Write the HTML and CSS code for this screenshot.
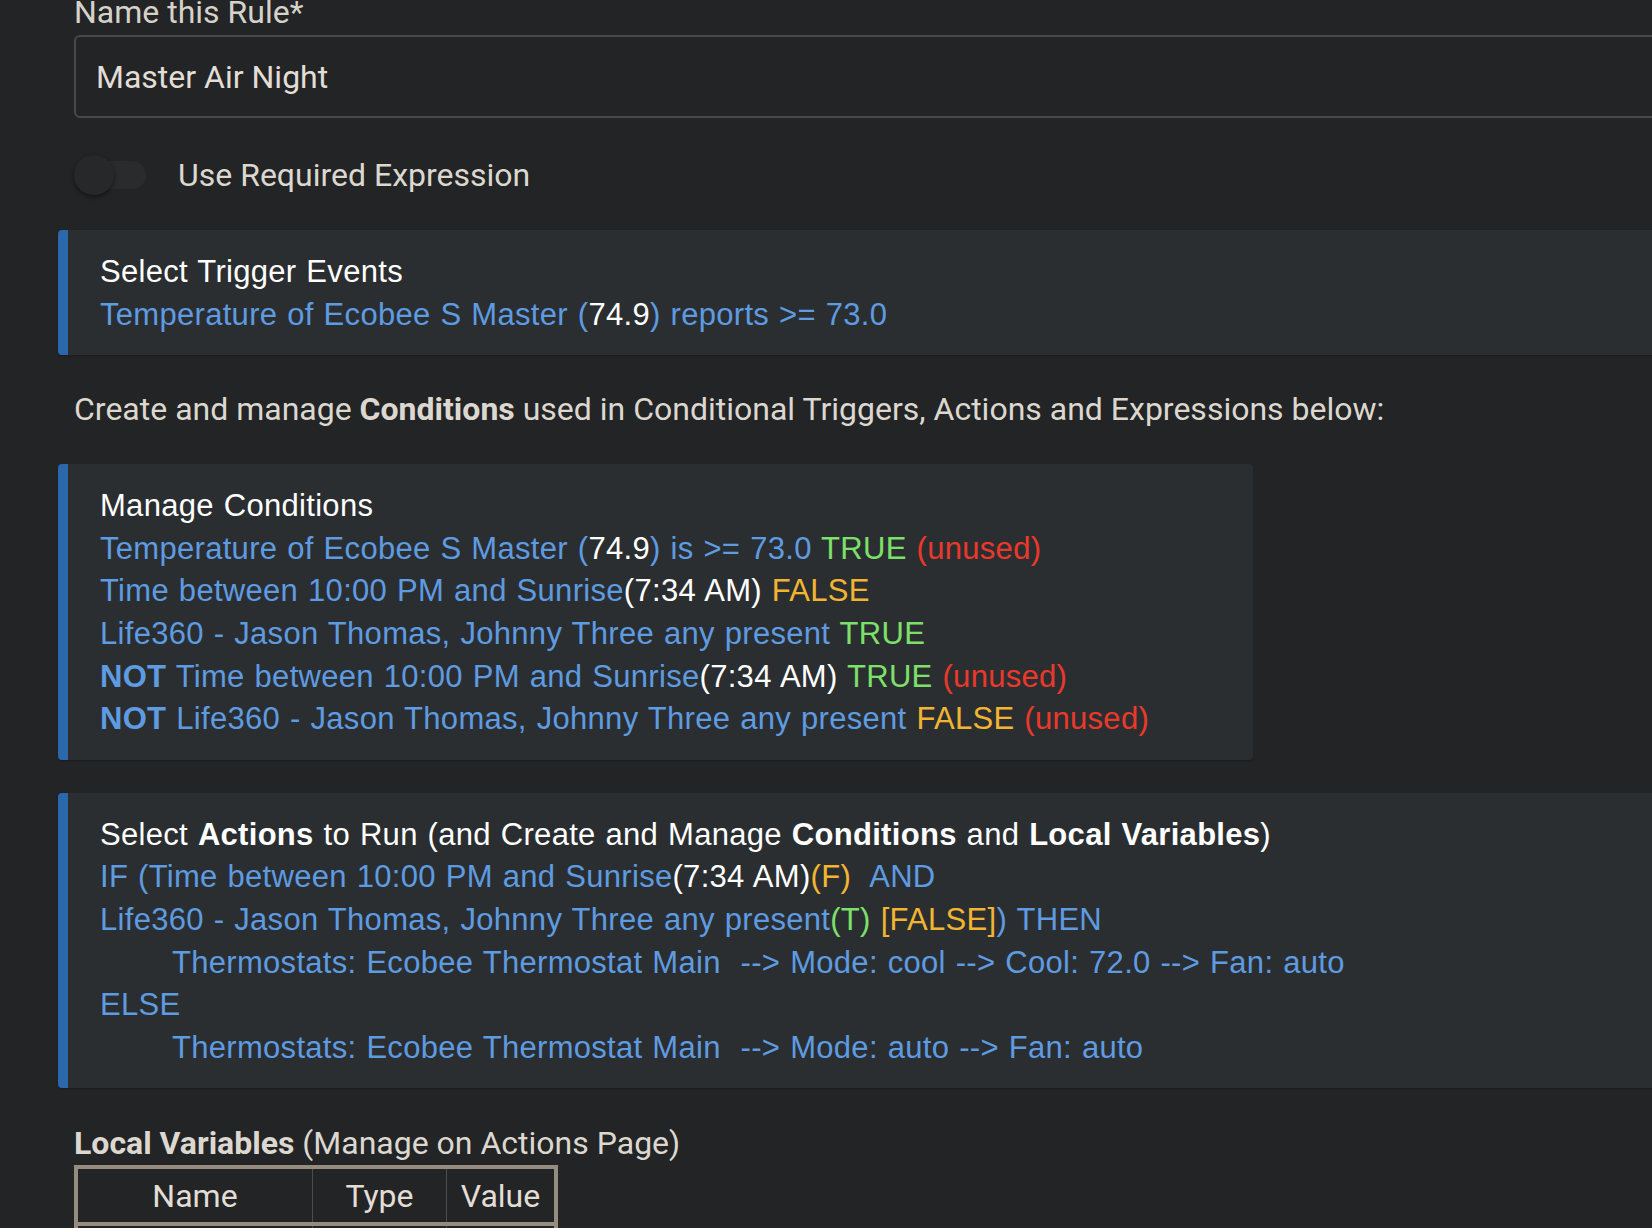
FILE: index.html
```html
<!DOCTYPE html>
<html lang="en">
<head>
<meta charset="utf-8">
<title>Master Air Night</title>
<link rel="stylesheet" href="styles.css">
</head>
<body>
<main class="page">
  <div class="field">
    <label class="field-label">Name this Rule*</label>
    <div class="text-input">Master Air Night</div>
  </div>

  <div class="switch-row">
    <span class="switch"><span class="switch-knob"></span></span>
    <span class="switch-label">Use Required Expression</span>
  </div>

  <section class="panel panel-wide panel-trigger">
    <div class="panel-title">Select Trigger Events</div>
    <div class="line">Temperature of Ecobee S Master (<span class="val">74.9</span>) reports &gt;= 73.0</div>
  </section>

  <p class="intro">Create and manage <b>Conditions</b> used in Conditional Triggers, Actions and Expressions below:</p>

  <section class="panel panel-conditions">
    <div class="panel-title">Manage Conditions</div>
    <div class="line">Temperature of Ecobee S Master (<span class="val">74.9</span>) is &gt;= 73.0 <span class="t">TRUE</span> <span class="u">(unused)</span></div>
    <div class="line">Time between 10:00 PM and Sunrise<span class="val">(7:34 AM)</span> <span class="f">FALSE</span></div>
    <div class="line">Life360 - Jason Thomas, Johnny Three any present <span class="t">TRUE</span></div>
    <div class="line"><b>NOT</b> Time between 10:00 PM and Sunrise<span class="val">(7:34 AM)</span> <span class="t">TRUE</span> <span class="u">(unused)</span></div>
    <div class="line"><b>NOT</b> Life360 - Jason Thomas, Johnny Three any present <span class="f">FALSE</span> <span class="u">(unused)</span></div>
  </section>

  <section class="panel panel-wide panel-actions">
    <div class="panel-title">Select <b>Actions</b> to Run (and Create and Manage <b>Conditions</b> and <b>Local Variables</b>)</div>
    <div class="line">IF (Time between 10:00 PM and Sunrise<span class="val">(7:34 AM)</span><span class="f">(F)</span>&nbsp; AND</div>
    <div class="line">Life360 - Jason Thomas, Johnny Three any present<span class="t">(T)</span> <span class="f">[FALSE]</span>) THEN</div>
    <div class="line indent">Thermostats: Ecobee Thermostat Main&nbsp; --&gt; Mode: cool --&gt; Cool: 72.0 --&gt; Fan: auto</div>
    <div class="line">ELSE</div>
    <div class="line indent">Thermostats: Ecobee Thermostat Main&nbsp; --&gt; Mode: auto --&gt; Fan: auto</div>
  </section>

  <div class="vars">
    <div class="vars-title"><b>Local Variables</b> (Manage on Actions Page)</div>
    <table class="vars-table">
      <thead>
        <tr><th class="c-name">Name</th><th class="c-type">Type</th><th class="c-value">Value</th></tr>
      </thead>
      <tbody>
        <tr><td></td><td></td><td></td></tr>
      </tbody>
    </table>
  </div>
</main>
</body>
</html>
```
FILE: styles.css
```css
html, body {
  margin: 0;
  padding: 0;
}
body {
  background: #232426;
  overflow: hidden;
  width: 1652px;
  height: 1228px;
  font-family: Roboto, "Liberation Sans", Arial, sans-serif;
  color: #dcd8d0;
}
.page {
  width: 1800px;
  padding-left: 58px;
  box-sizing: border-box;
}
.field {
  margin-left: 16px;
  margin-top: -7px;
}
.field-label {
  display: block;
  font-size: 32px;
  line-height: 38px;
  color: #d6d2ca;
}
.text-input {
  margin-top: 4px;
  height: 83px;
  box-sizing: border-box;
  border: 2px solid #4b4946;
  border-radius: 6px;
  padding-left: 20px;
  display: flex;
  align-items: center;
  font-size: 32px;
  color: #e2ded6;
}
.switch-row {
  margin-left: 16px;
  margin-top: 37px;
  height: 40px;
  display: flex;
  align-items: center;
  gap: 32px;
}
.switch {
  position: relative;
  width: 72px;
  height: 28px;
  border-radius: 14px;
  background: #2a2b2d;
  display: block;
}
.switch-knob {
  position: absolute;
  left: 0;
  top: -6px;
  width: 40px;
  height: 40px;
  border-radius: 50%;
  background: #27282a;
  box-shadow: 0 2px 4px rgba(0, 0, 0, 0.45);
}
.switch-label {
  font-size: 32px;
  color: #dcd8d0;
}
.panel {
  background: #2b2e31;
  border-left: 10px solid #2a67ab;
  border-radius: 4px;
  padding: 21px 0 19px 32px;
  font-family: "Liberation Sans", Arial, sans-serif;
  font-size: 31px;
  letter-spacing: 0.3px;
  word-spacing: 1px;
  line-height: 42.6px;
  color: #5e9be0;
  box-sizing: border-box;
  box-shadow: 0 1px 2px rgba(0, 0, 0, 0.25);
}
.panel-wide {
  width: 1740px;
}
.panel-trigger {
  margin-top: 35px;
}
.panel-conditions {
  margin-top: 36px;
  width: 1195px;
}
.panel-actions {
  margin-top: 33px;
}
.panel-title {
  color: #ffffff;
}
.line {
  white-space: nowrap;
}
.indent {
  padding-left: 72px;
}
.val {
  color: #ffffff;
}
.t {
  color: #7de06a;
}
.f {
  color: #f2b531;
}
.u {
  color: #ea392b;
}
.intro {
  margin: 35px 0 0 16px;
  font-size: 32px;
  line-height: 38px;
  color: #dcd8d0;
}
.intro b {
  font-weight: 700;
}
.vars {
  margin-left: 16px;
  margin-top: 36px;
}
.vars-title {
  font-size: 32px;
  line-height: 38px;
  color: #dcd8d0;
}
.vars-table {
  margin-top: 3px;
  border-collapse: collapse;
  border: 4px solid #958b7f;
  font-size: 32px;
  color: #e2ded6;
}
.vars-table th {
  font-weight: 400;
  height: 53px;
  padding: 0;
  border-bottom: 4px solid #958b7f;
  border-left: 1px solid #4f4d4a;
  text-align: center;
}
.vars-table td {
  height: 40px;
  border-left: 1px solid #4f4d4a;
}
.vars-table th:first-child,
.vars-table td:first-child {
  border-left: none;
}
.c-name { width: 234px; }
.c-type { width: 133px; }
.c-value { width: 107px; }
```
